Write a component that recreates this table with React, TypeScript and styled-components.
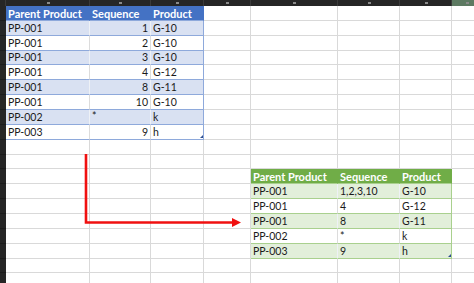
import React from "react";
import styled, { createGlobalStyle, css } from "styled-components";

const GlobalStyle = createGlobalStyle`
  html, body {
    margin: 0;
    padding: 0;
    background: #ffffff;
    overflow: hidden;
  }
  body {
    font-family: Lato, "Open Sans", "Liberation Sans", sans-serif;
  }
`;

// column widths: row-header strip, then A..H
const COLS = [6, 84, 61, 53, 47, 87, 62, 52, 30];
const ROW_H = 14.87;
const ROW_COUNT = 19;

type Theme = "blue" | "green";
type Kind = "head" | "band" | "plain";

const palette = {
  blue: { head: "#4472c4", band: "#d9e1f2", line: "#8ea9db" },
  green: { head: "#70ad47", band: "#e2efda", line: "#a9d08e" },
};

type CellData = {
  text?: string;
  theme?: Theme;
  kind?: Kind;
  right?: boolean;
  tableRight?: boolean;
  handle?: boolean;
  top?: boolean;
};

const blueRows: [string, string, string][] = [
  ["PP-001", "1", "G-10"],
  ["PP-001", "2", "G-10"],
  ["PP-001", "3", "G-10"],
  ["PP-001", "4", "G-12"],
  ["PP-001", "8", "G-11"],
  ["PP-001", "10", "G-10"],
  ["PP-002", "*", "k"],
  ["PP-003", "9", "h"],
];

const greenRows: [string, string, string][] = [
  ["PP-001", "1,2,3,10", "G-10"],
  ["PP-001", "4", "G-12"],
  ["PP-001", "8", "G-11"],
  ["PP-002", "*", "k"],
  ["PP-003", "9", "h"],
];

const headers = ["Parent Product", "Sequence", "Product"];

// build a sheet of rows x 8 data columns
const buildSheet = (): CellData[][] => {
  const sheet: CellData[][] = [];
  for (let r = 0; r < ROW_COUNT; r++) {
    sheet.push(Array.from({ length: 8 }, () => ({})));
  }

  headers.forEach((h, c) => {
    sheet[0][c] = { text: h, theme: "blue", kind: "head", tableRight: c === 2 };
  });
  blueRows.forEach((row, i) => {
    row.forEach((v, c) => {
      const isText = v === "*";
      sheet[i + 1][c] = {
        text: v,
        theme: "blue",
        kind: i % 2 === 0 ? "band" : "plain",
        right: c === 1 && !isText,
        top: isText,
        tableRight: c === 2,
        handle: c === 2 && i === blueRows.length - 1,
      };
    });
  });

  // green table sits in columns E..G starting at row 11
  headers.forEach((h, c) => {
    sheet[11][c + 4] = { text: h, theme: "green", kind: "head", tableRight: c === 2 };
  });
  greenRows.forEach((row, i) => {
    row.forEach((v, c) => {
      sheet[12 + i][c + 4] = {
        text: v,
        theme: "green",
        kind: i % 2 === 0 ? "band" : "plain",
        tableRight: c === 2,
        handle: c === 2 && i === greenRows.length - 1,
      };
    });
  });

  return sheet;
};

const Frame = styled.div`
  position: relative;
  width: 474px;
  height: 283px;
  overflow: hidden;
`;

const Grid = styled.div`
  display: grid;
  grid-template-columns: ${COLS.map((w) => `${w}px`).join(" ")};
  grid-template-rows: 6px repeat(${ROW_COUNT}, ${ROW_H}px);
`;

// column letters are scrolled out of view: only their feet show as small marks
const ColHead = styled.div<{ $selected?: boolean; $mark?: boolean }>`
  position: relative;
  background: ${(p) => (p.$selected ? "#5d7a62" : "#262626")};
  border-right: 1px solid #3a3a3a;

  ${(p) =>
    p.$mark &&
    css`
      &::after {
        content: "";
        position: absolute;
        left: 50%;
        bottom: 2px;
        width: 3px;
        height: 2px;
        margin-left: -1px;
        background: #8a8a8a;
      }
    `}
`;

const RowHead = styled.div`
  background: #262626;
  border-bottom: 1px solid #1c1c1c;
`;

const Cell = styled.div<{
  $theme?: Theme;
  $kind?: Kind;
  $right?: boolean;
  $tableRight?: boolean;
  $top?: boolean;
}>`
  position: relative;
  box-sizing: border-box;
  border-right: 1px solid #d9d9d9;
  border-bottom: 1px solid #d9d9d9;
  padding: 0 2px 0 2px;
  font-size: 10.5px;
  color: #1a1a1a;
  white-space: nowrap;
  overflow: visible;
  display: flex;
  align-items: ${(p) => (p.$top ? "flex-start" : "flex-end")};
  justify-content: ${(p) => (p.$right ? "flex-end" : "flex-start")};
  line-height: 13px;

  ${(p) =>
    p.$theme &&
    css`
      border-bottom-color: ${palette[p.$theme].line};
      border-right-color: ${p.$tableRight
        ? palette[p.$theme].line
        : p.$kind === "plain"
          ? "#dcdcdc"
          : "#eef1f6"};
    `}

  ${(p) =>
    p.$theme &&
    p.$kind === "head" &&
    css`
      background: ${palette[p.$theme].head};
      border-right-color: ${palette[p.$theme].head};
      color: #ffffff;
      font-weight: 700;
      font-size: 11px;
    `}

  ${(p) =>
    p.$theme &&
    p.$kind === "band" &&
    css`
      background: ${palette[p.$theme].band};
    `}
`;

const Handle = styled.span`
  position: absolute;
  right: 0;
  bottom: 1px;
  width: 0;
  height: 0;
  border-left: 3px solid transparent;
  border-bottom: 3px solid #2f4f8f;
`;

const ArrowLayer = styled.svg`
  position: absolute;
  left: 0;
  top: 0;
  pointer-events: none;
`;

export default function App() {
  const sheet = buildSheet();

  return (
    <>
      <GlobalStyle />
      <Frame>
        <Grid>
          {COLS.map((_, i) => (
            <ColHead key={`h${i}`} $selected={i === 8} $mark={i > 0} />
          ))}
          {sheet.map((row, r) => (
            <React.Fragment key={r}>
              <RowHead />
              {row.map((cell, c) => (
                <Cell
                  key={c}
                  $theme={cell.theme}
                  $kind={cell.kind}
                  $right={cell.right}
                  $tableRight={cell.tableRight}
                  $top={cell.top}
                >
                  {cell.text}
                  {cell.handle && <Handle />}
                </Cell>
              ))}
            </React.Fragment>
          ))}
        </Grid>
        <ArrowLayer width={474} height={283}>
          <polyline
            points="86,154 86,222.5 233,222.5"
            fill="none"
            stroke="#f01010"
            strokeWidth={2.6}
          />
          <polygon points="232,218 241,222.5 232,227" fill="#f01010" />
        </ArrowLayer>
      </Frame>
    </>
  );
}
